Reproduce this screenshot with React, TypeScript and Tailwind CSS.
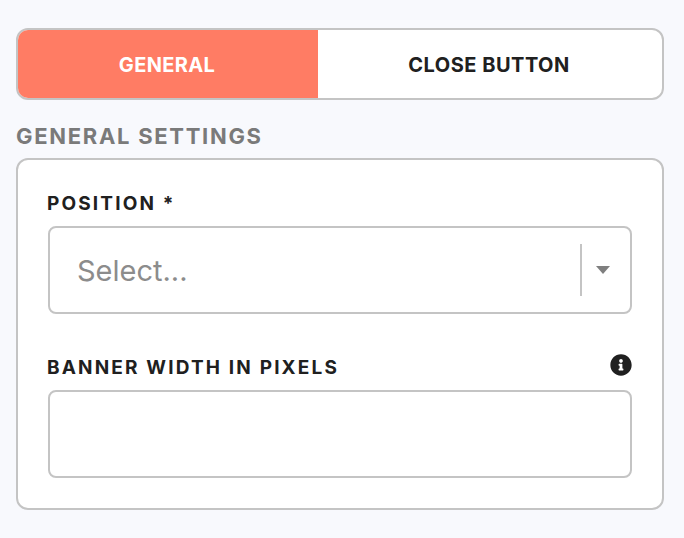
import React from 'react';
import { FaInfoCircle } from 'react-icons/fa';

const font = 'font-["Inter",sans-serif]';

const App: React.FC = () => {
  return (
    <div className={`w-[684px] h-[538px] overflow-hidden bg-[#f8f9fd] pl-4 pr-5 pt-7 ${font}`}>
      {/* Tabs */}
      <div className="flex h-[72px] overflow-hidden rounded-[12px] border-2 border-[#c4c4c4] bg-white">
        <div className="flex w-[300px] items-center justify-center bg-[#ff7c64] pt-[2px] pr-[2px] text-[20px] font-bold tracking-[0.35px] text-white">
          GENERAL
        </div>
        <div className="flex flex-1 items-center justify-center pt-[2px] pr-[2px] text-[20px] font-bold tracking-[0.5px] text-[#202020]">
          CLOSE BUTTON
        </div>
      </div>

      {/* Section title */}
      <h2 className="mt-[23px] h-[35px] text-[22px] leading-[26px] font-bold tracking-[1.7px] text-[#7a7a7a]">
        GENERAL SETTINGS
      </h2>

      {/* Card */}
      <div className="flex h-[352px] flex-col rounded-[12px] border-2 border-[#c4c4c4] bg-white px-[30px] pt-[32px]">
        <label className="-ml-px text-[19px] leading-[24px] font-bold tracking-[2.16px] text-[#202020]">
          POSITION *
        </label>
        <div className="mt-[10px] flex h-[88px] items-center rounded-[8px] border-2 border-[#c4c4c4] bg-white pl-[27px]">
          <span className="flex-1 pt-[2px] text-[29px] text-[#8c8c8c]">Select...</span>
          <div className="h-[52px] w-[2px] bg-[#c4c4c4]" />
          <div className="mr-[6px] flex w-[42px] justify-center">
            <svg width="14" height="8" viewBox="0 0 14 8">
              <path d="M0 0h14L7 8z" fill="#7f7f7f" />
            </svg>
          </div>
        </div>

        <div className="mt-[42px] flex h-[24px] items-center justify-between">
          <label className="-ml-px text-[19px] leading-[24px] font-bold tracking-[2.16px] text-[#202020]">
            BANNER WIDTH IN PIXELS
          </label>
          <FaInfoCircle className="mb-[6px] h-[22px] w-[22px] text-[#202020]" />
        </div>
        <div className="mt-[10px] h-[88px] rounded-[8px] border-2 border-[#c4c4c4] bg-white" />
      </div>
    </div>
  );
};

export default App;
